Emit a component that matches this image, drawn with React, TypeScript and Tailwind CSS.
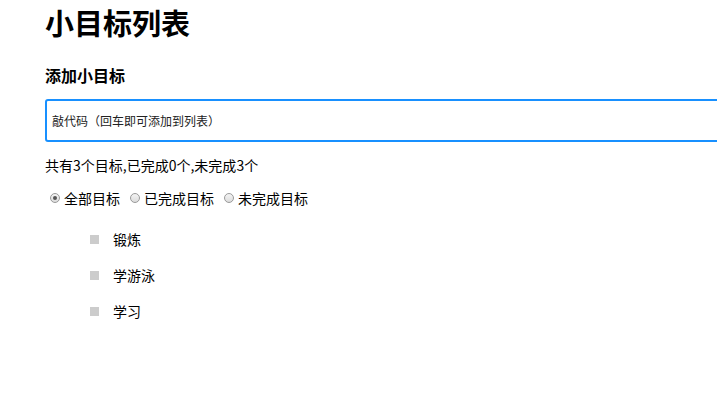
import React, { useState } from 'react';

type Goal = { id: number; title: string; done: boolean };

const initialGoals: Goal[] = [
  { id: 1, title: '锻炼', done: false },
  { id: 2, title: '学游泳', done: false },
  { id: 3, title: '学习', done: false },
];

const filters = [
  { key: 'all', label: '全部目标' },
  { key: 'done', label: '已完成目标' },
  { key: 'todo', label: '未完成目标' },
];

const App: React.FC = () => {
  const [goals] = useState<Goal[]>(initialGoals);
  const [filter, setFilter] = useState('all');

  const doneCount = goals.filter((g) => g.done).length;

  return (
    <div className="min-h-screen overflow-x-hidden bg-white pl-[45px] text-black [font-family:'Noto_Sans_CJK_SC','Microsoft_YaHei',sans-serif]">
      {/* Title */}
      <h1 className="pt-[2px] text-[29px] font-bold leading-[40px]">小目标列表</h1>

      {/* Add form */}
      <h3 className="mt-[21px] text-[16px] font-bold leading-[24px]">添加小目标</h3>
      <div className="-mr-[6px] mt-[12px] flex h-[43px] items-center rounded-[3px] border-[2px] border-[#1890ff] pl-[5px]">
        <span className="text-[12px] text-[#222]">敲代码（回车即可添加到列表）</span>
      </div>

      {/* Summary */}
      <p className="mt-[13px] text-[14px] leading-[20px]">
        共有{goals.length}个目标,已完成{doneCount}个,未完成{goals.length - doneCount}个
      </p>

      {/* Filters */}
      <div className="mt-[13px] flex items-center pl-[5px] text-[14px] leading-[20px]">
        {filters.map((f) => (
          <label key={f.key} className="mr-[10px] flex cursor-pointer items-center" onClick={() => setFilter(f.key)}>
            <span className="mr-[4px] flex h-[10px] w-[10px] items-center justify-center rounded-full border border-[#9a9a9a] bg-gradient-to-b from-[#f4f4f4] to-[#dcdcdc]">
              {filter === f.key && <span className="h-[4px] w-[4px] rounded-full bg-[#555]" />}
            </span>
            {f.label}
          </label>
        ))}
      </div>

      {/* Goal list */}
      <ul className="mt-[13px] pl-[45px]">
        {goals.map((g) => (
          <li key={g.id} className="flex h-[36px] items-center text-[14px]">
            <span className="mr-[14px] h-[9px] w-[9px] bg-[#cccccc]" />
            {g.title}
          </li>
        ))}
      </ul>
    </div>
  );
};

export default App;
